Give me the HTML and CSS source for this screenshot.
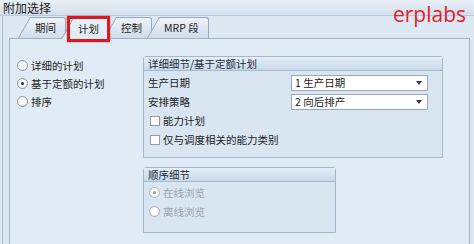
FILE: index.html
```html
<!DOCTYPE html>
<html lang="zh-CN">

<head>
    <meta charset="UTF-8">
    <title>附加选择</title>
    <link rel="stylesheet" href="styles.css">
</head>

<body>
    <!-- 标题栏 -->
    <div class="titlebar">附加选择</div>
    <div class="brand">erplabs</div>

    <div class="frame">
        <!-- 页签 -->
        <div class="tabs">
            <div class="tab">期间</div>
            <div class="tab active">计划<span class="mark"></span></div>
            <div class="tab">控制</div>
            <div class="tab">MRP 段</div>
        </div>

        <!-- 计划页签内容 -->
        <div class="panel">
            <div class="modes">
                <label class="radio"><span class="dot"></span>详细的计划</label>
                <label class="radio"><span class="dot on"></span>基于定额的计划</label>
                <label class="radio"><span class="dot"></span>排序</label>
            </div>

            <div class="groups">
                <div class="group detail">
                    <div class="group-head">详细细节/基于定额计划</div>
                    <div class="group-body">
                        <div class="row">
                            <span class="label">生产日期</span>
                            <div class="select">1 生产日期<span class="arrow"></span></div>
                        </div>
                        <div class="row">
                            <span class="label">安排策略</span>
                            <div class="select">2 向后排产<span class="arrow"></span></div>
                        </div>
                        <div class="row"><span class="box"></span>能力计划</div>
                        <div class="row"><span class="box"></span>仅与调度相关的能力类别</div>
                    </div>
                </div>

                <div class="group sequence">
                    <div class="group-head">顺序细节</div>
                    <div class="group-body disabled">
                        <label class="radio"><span class="dot on"></span>在线浏览</label>
                        <label class="radio"><span class="dot"></span>离线浏览</label>
                    </div>
                </div>
            </div>
        </div>
    </div>
</body>

</html>
```

FILE: styles.css
```css
* {
    margin: 0;
    padding: 0;
    box-sizing: border-box;
}

body {
    width: 474px;
    height: 244px;
    overflow: hidden;
    position: relative;
    background-color: #dde8f2;
    color: #1c1c1c;
    font-family: 'Noto Sans CJK SC', 'Liberation Sans', sans-serif;
    font-size: 10.5px;
}

/*标题栏*/
.titlebar {
    height: 16px;
    line-height: 16px;
    padding-left: 3px;
    font-size: 12px;
    color: #1a1a1a;
    background: linear-gradient(#e9f0f7, #d4e0ec);
    border-bottom: 1px solid #b7c8d9;
}

.brand {
    position: absolute;
    top: 4px;
    right: 8px;
    font-family: 'Open Sans', 'Liberation Sans', sans-serif;
    font-size: 21px;
    line-height: 21px;
    color: #e3202b;
}

.frame {
    height: 228px;
    margin-left: 2px;
    padding: 0 4px 0 6px;
    border-left: 1px solid #a9bdd1;
}

/*页签*/
.tabs {
    height: 22px;
    display: flex;
    align-items: flex-end;
    padding-left: 9px;
}

.tab {
    position: relative;
    z-index: 1;
    height: 21px;
    line-height: 21px;
    padding: 0 10px 0 17px;
    margin-right: -5px;
    color: #1c1c1c;
}

.tab::before,
.tab::after {
    content: "";
    position: absolute;
    top: 0;
    bottom: 0;
    z-index: -1;
    background: linear-gradient(#eef3f9, #cfdceb);
    border-top: 1px solid #94a9c0;
}

.tab::before {
    left: 0;
    width: 24px;
    border-left: 1px solid #94a9c0;
    transform: skewX(-30deg);
    transform-origin: bottom left;
}

.tab::after {
    left: 14px;
    right: 0;
    border-right: 1px solid #94a9c0;
    border-radius: 0 3px 0 0;
}

.tab.active {
    z-index: 3;
    height: 22px;
    margin-bottom: -1px;
    padding-top: 1px;
}

.tab.active::before,
.tab.active::after {
    background: linear-gradient(#e9f1f9, #e1ebf5);
}

.mark {
    position: absolute;
    left: 6px;
    top: -1px;
    right: -1px;
    bottom: -3px;
    border: 3px solid #e0161f;
    box-shadow: 0 0 2px rgba(120, 0, 0, 0.4);
}

/*内容区*/
.panel {
    height: 206px;
    display: flex;
    padding: 17px 0 0 7px;
    background-color: #e1ebf5;
    border: 1px solid #9db2c8;
    border-bottom: none;
}

.modes {
    width: 126px;
    display: flex;
    flex-direction: column;
}

.radio {
    height: 18px;
    display: flex;
    align-items: center;
    gap: 3px;
}

.dot {
    width: 11px;
    height: 11px;
    border-radius: 50%;
    border: 1px solid #8a99aa;
    background: radial-gradient(#ffffff 40%, #e2e8ee);
    display: flex;
    align-items: center;
    justify-content: center;
}

.dot.on::after {
    content: "";
    width: 3px;
    height: 3px;
    border-radius: 50%;
    background-color: #2a2f36;
}

.groups {
    display: flex;
    flex-direction: column;
    gap: 9px;
}

.group {
    background-color: #d9e6f2;
    border: 1px solid #a4b8cd;
    border-radius: 3px 3px 0 0;
}

.group-head {
    height: 14px;
    line-height: 14px;
    padding-left: 4px;
    color: #1e2b3a;
    background: linear-gradient(#e5eef7, #c9d9ea);
    border-bottom: 1px solid #a4b8cd;
}

.detail {
    width: 300px;
    height: 102px;
}

.detail .group-body {
    padding: 2px 14px 0 4px;
}

.row {
    height: 19px;
    display: flex;
    align-items: center;
}

.label {
    width: 143px;
}

.select {
    position: relative;
    width: 137px;
    height: 16px;
    line-height: 14px;
    padding-left: 3px;
    background-color: #ffffff;
    border: 1px solid #9aa9b9;
}

.arrow {
    position: absolute;
    right: 5px;
    top: 5px;
    border-left: 3px solid transparent;
    border-right: 3px solid transparent;
    border-top: 4px solid #2c3a52;
}

.box {
    width: 10px;
    height: 10px;
    margin: 0 3px 0 2px;
    background-color: #ffffff;
    border: 1px solid #8e9cab;
}

.sequence {
    width: 193px;
    height: 66px;
}

.sequence .group-body {
    padding: 1px 4px 0 5px;
}

.sequence .radio {
    height: 19px;
}

.disabled {
    color: #9ba4ae;
}

.disabled .dot {
    border-color: #aab4bf;
}

.disabled .dot.on::after {
    background-color: #8d96a0;
}
```
